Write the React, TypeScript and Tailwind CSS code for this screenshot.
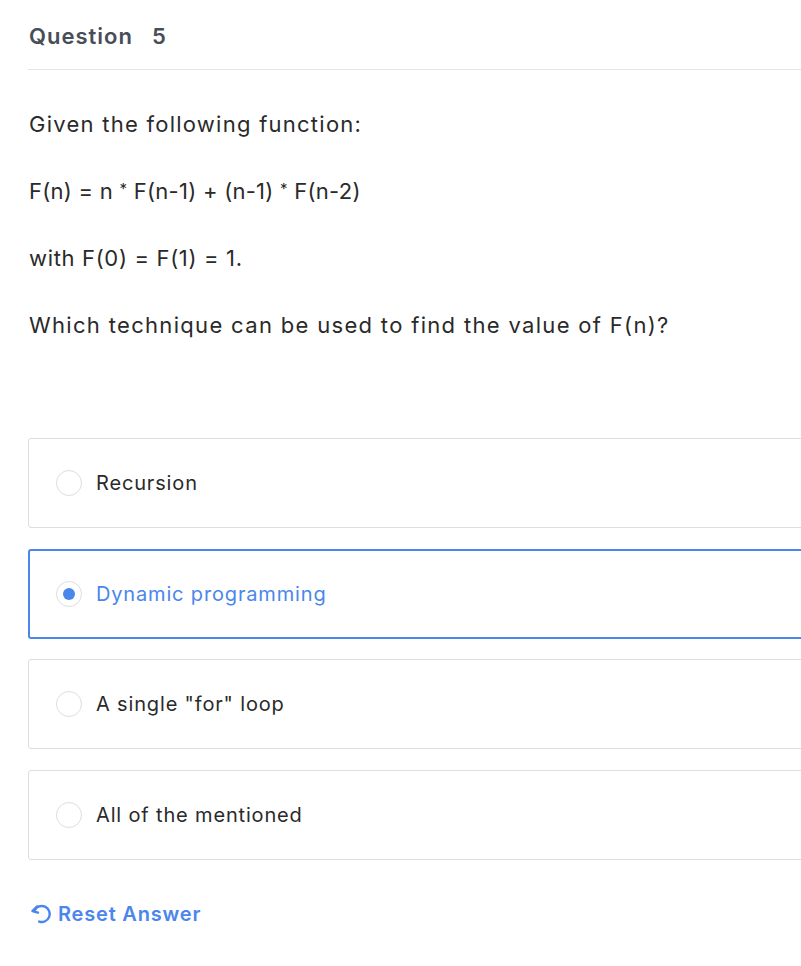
const options = [
    { label: "Recursion", selected: false },
    { label: "Dynamic programming", selected: true },
    { label: 'A single "for" loop', selected: false },
    { label: "All of the mentioned", selected: false },
];

function UndoIcon() {
    return (
        <svg
            width="24"
            height="22"
            viewBox="0 0 24 22"
            fill="none"
            stroke="currentColor"
            strokeWidth="2.4"
            strokeLinecap="round"
            strokeLinejoin="round"
        >
            <path d="M6.6 7.4 A8 8 0 1 1 11.2 18.6" />
            <path d="M9.2 3.4 L4.4 8 L10 9.6" />
        </svg>
    );
}

// raised, small asterisk like the original typeface
function Star() {
    return <span className="relative top-[-5px] text-[15px] leading-[0]">*</span>;
}

export default function App() {
    return (
        <div
            className="w-[801px] min-h-[966px] overflow-hidden bg-white pl-[28px] pt-[21px]"
            style={{ fontFamily: "Inter, 'Open Sans', sans-serif" }}
        >
            <div className="w-[820px]">
                <h2 className="flex gap-[19px] text-[22px] leading-[30px] font-semibold text-[#484e57] pl-[1px] tracking-[0.045em]">
                    <span>Question</span>
                    <span>5</span>
                </h2>
                <div className="mt-[18px] h-px bg-[#e4e5e9]" />

                <div className="mt-[39px] flex flex-col gap-[37px] text-[22px] leading-[30px] text-[#2a2a2a] pl-[1px]">
                    <p className="tracking-[0.057em]">Given the following function:</p>
                    <p className="h-[30px] tracking-[0.012em]">
                        F(n) = n <Star /> F(n-1) + (n-1) <Star /> F(n-2)
                    </p>
                    <p className="tracking-[0.03em]">with F(0) = F(1) = 1.</p>
                    <p className="tracking-[0.06em]">
                        Which technique can be used to find the value of F(n)?
                    </p>
                </div>

                <div className="mt-[98px] flex flex-col gap-[20.5px]">
                    {options.map((opt) => (
                        <div
                            key={opt.label}
                            className={
                                opt.selected
                                    ? "h-[90px] flex items-center rounded-[3px] border-2 border-[#4a86ec] pl-[26px]"
                                    : "h-[90px] flex items-center rounded-[3px] border border-[#dcdee3] pl-[27px]"
                            }
                        >
                            <span className="w-[26px] h-[26px] rounded-full border border-[#dcdde6] flex items-center justify-center">
                                {opt.selected && (
                                    <span className="w-[12px] h-[12px] rounded-full bg-[#4a86ec]" />
                                )}
                            </span>
                            <span
                                className={
                                    opt.selected
                                        ? "ml-[14px] text-[20px] tracking-[0.042em] text-[#4a86ec]"
                                        : "ml-[14px] text-[20px] tracking-[0.042em] text-[#2a2a2a]"
                                }
                            >
                                {opt.label}
                            </span>
                        </div>
                    ))}
                </div>

                <button className="mt-[40px] flex items-center gap-[6px] text-[20px] leading-[28px] font-semibold tracking-[0.04em] text-[#4a86ec]">
                    <UndoIcon />
                    Reset Answer
                </button>
            </div>
        </div>
    );
}
